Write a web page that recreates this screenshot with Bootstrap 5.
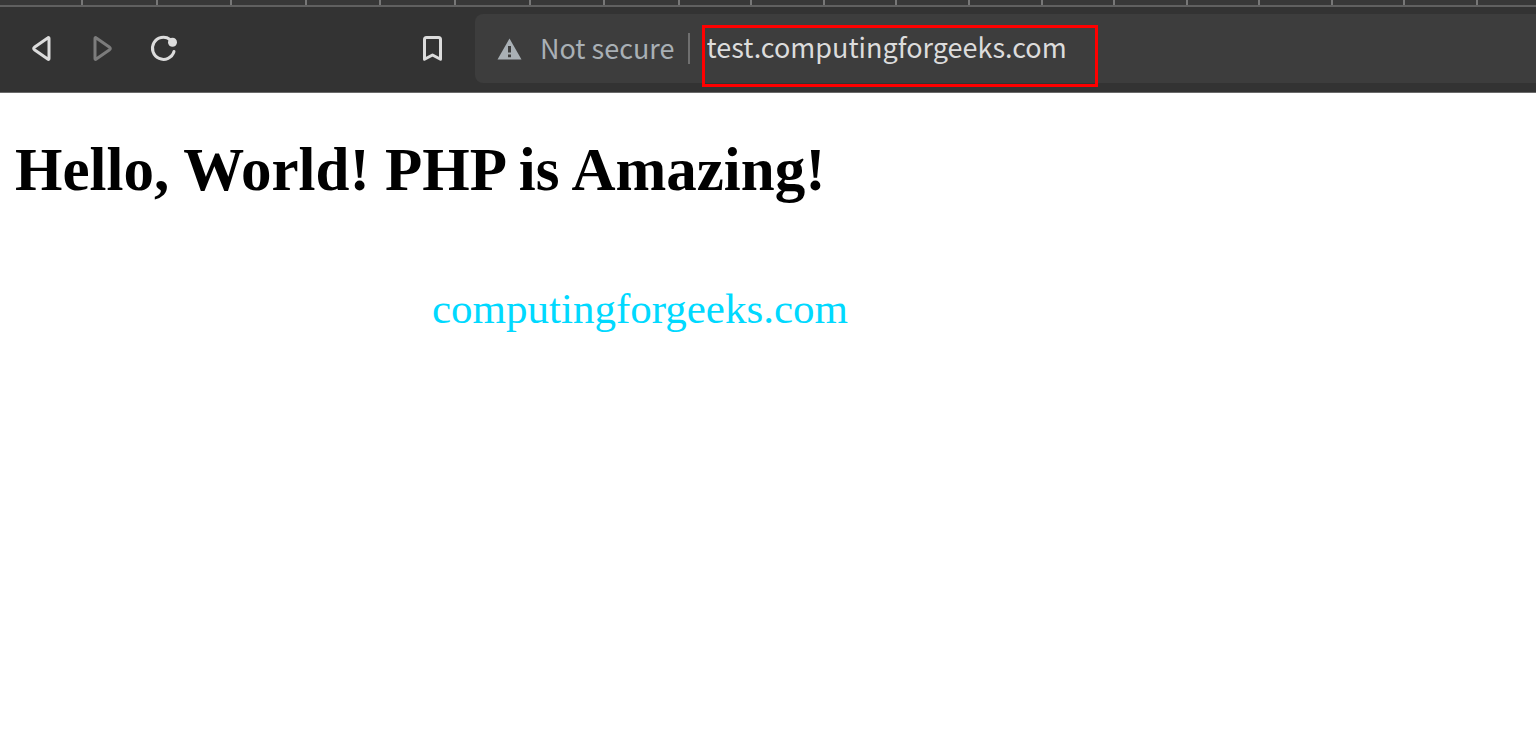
<!DOCTYPE html>
<html lang="en">
<head>
<meta charset="utf-8">
<meta name="viewport" content="width=device-width, initial-scale=1">
<title>test.computingforgeeks.com</title>
<link href="https://cdn.jsdelivr.net/npm/bootstrap@5.3.0/dist/css/bootstrap.min.css" rel="stylesheet">
<style>
  body { background: #fff; color: #000; font-family: "Liberation Serif", serif; }
  .browser-bar { background: #333; border-bottom: 1px solid #6a6a6a; font-family: "Noto Sans CJK SC", sans-serif; }
  .tab-strip { display: grid; grid-template-columns: 166fr repeat(8, 149fr) repeat(11, 145fr) 116fr; height: 7px; background: #383838; border-bottom: 2px solid #606060; }
  .tab-strip span { border-right: 2px solid #777; }
  .tab-strip span:last-child { border: 0; }
  .tools { padding: 7px 0 9px 24px; }
  .tool-btn { width: 36px; height: 36px; padding: 0; border: 0; background: none; color: #dcdcdc; }
  .tool-btn:disabled { color: #7c7c7c; opacity: 1; }
  .tool-btn svg { display: block; }
  .nav-group { gap: 25px; width: 426px; }
  .address { background: #3d3d3d; border-radius: 8px 0 0 8px; height: 69px; margin-left: 25px; padding-left: 22px; font-size: 27px; line-height: 40px; }
  .insecure { color: #a9b0b5; gap: 18px; }
  .insecure span { padding-bottom: 2px; }
  .divider { width: 2px; height: 31px; background: #6f6f6f; margin: 0 12px 0 13px; }
  .url-wrap { width: 396px; height: 62px; margin-top: 15px; border: 3px solid #f00; }
  .url-input { display: block; width: 100%; height: 38px; padding: 0 0 0 2px; border: 0; background: none; color: #dcdcdc; outline: 0; font-size: 27px; line-height: 38px; }
  .page { padding: 42px 15px; }
  .page h1 { font-size: 61px; line-height: 70px; font-weight: 700; margin-bottom: 79px; }
  .site-link { margin-left: 417px; color: #00d9ff; font-size: 43px; line-height: 50px; }
</style>
</head>
<body>
<header class="browser-bar">
  <div class="tab-strip" aria-hidden="true">
    <span></span><span></span><span></span><span></span><span></span><span></span><span></span><span></span><span></span><span></span><span></span><span></span><span></span><span></span><span></span><span></span><span></span><span></span><span></span><span></span><span></span>
  </div>
  <div class="tools d-flex align-items-center">
    <div class="nav-group d-flex flex-shrink-0">
      <button class="tool-btn" type="button" aria-label="Back">
        <svg width="36" height="36" viewBox="0 1 36 36" fill="none" stroke="currentColor" stroke-width="3" stroke-linejoin="round"><path d="M25 8.500V28.500Q25 30 23.700 29L10.400 19.700Q9 18.500 10.400 17.300L23.700 8Q25 7 25 8.500Z"/></svg>
      </button>
      <button class="tool-btn" type="button" aria-label="Forward" disabled>
        <svg width="36" height="36" viewBox="0 1 36 36" fill="none" stroke="currentColor" stroke-width="3" stroke-linejoin="round"><path d="M10 8.500V28.500Q10 30 11.300 29L24.600 19.700Q26 18.500 24.600 17.300L11.300 8Q10 7 10 8.500Z"/></svg>
      </button>
      <button class="tool-btn" type="button" aria-label="Reload">
        <svg width="36" height="36" viewBox="0 1 36 36" fill="none" stroke="currentColor" stroke-width="3" stroke-linecap="round"><path d="M24 9.500A11 11 0 1 0 28 21.500"/><circle cx="26.500" cy="12.300" r="4.500" fill="currentColor" stroke="none"/></svg>
      </button>
      <button class="tool-btn ms-auto" type="button" aria-label="Bookmark">
        <svg width="36" height="36" viewBox="0 1 36 36" fill="none" stroke="currentColor" stroke-width="3" stroke-linejoin="round"><path d="M10.500 9.500Q10.500 7.500 12.500 7.500H24.500Q26.500 7.500 26.500 9.500V29.300L18.500 25L10.500 29.300Z"/></svg>
      </button>
    </div>
    <div class="address d-flex flex-grow-1 align-items-center">
      <div class="insecure d-flex align-items-center text-nowrap">
        <svg width="25" height="22" viewBox="0 0 25 22" aria-hidden="true"><path fill="#a9b0b5" d="M12.500 .5L24.500 21.500H.5Z"/><path stroke="#3d3d3d" stroke-width="3" d="M12.500 8V14.500M12.500 16.500V19.300"/></svg>
        <span>Not secure</span>
      </div>
      <span class="divider"></span>
      <div class="url-wrap flex-shrink-0">
        <input class="url-input" type="text" aria-label="Address" value="test.computingforgeeks.com" spellcheck="false">
      </div>
    </div>
  </div>
</header>
<main class="page">
  <h1>Hello, World! PHP is Amazing!</h1>
  <a class="site-link d-inline-block text-decoration-none" href="#">computingforgeeks.com</a>
</main>
<script src="https://cdn.jsdelivr.net/npm/bootstrap@5.3.0/dist/js/bootstrap.bundle.min.js"></script>
</body>
</html>
